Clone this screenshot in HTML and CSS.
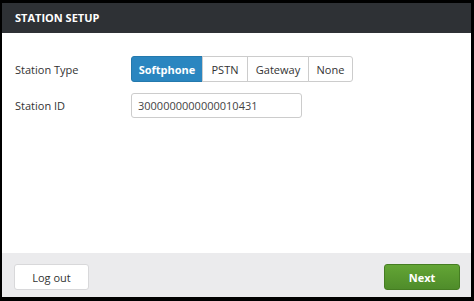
FILE: index.html
```html
<!DOCTYPE html>
<html lang="en">
<head>
  <meta charset="UTF-8">
  <title>Station Setup</title>
  <link rel="stylesheet" href="styles.css">
</head>
<body>
  <div class="dialog">
    <header class="dialog-header">STATION SETUP</header>
    <div class="dialog-body">
      <div class="form-row">
        <label class="form-label">Station Type</label>
        <div class="btn-group">
          <button class="seg seg-softphone active">Softphone</button>
          <button class="seg seg-pstn">PSTN</button>
          <button class="seg seg-gateway">Gateway</button>
          <button class="seg seg-none">None</button>
        </div>
      </div>
      <div class="form-row">
        <label class="form-label">Station ID</label>
        <input class="text-input" type="text" value="3000000000000010431">
      </div>
    </div>
    <footer class="dialog-footer">
      <button class="btn btn-default">Log out</button>
      <button class="btn btn-success">Next</button>
    </footer>
  </div>
</body>
</html>
```

FILE: styles.css
```css
* {
  margin: 0;
  padding: 0;
  box-sizing: border-box;
}

body {
  width: 474px;
  height: 301px;
  background: #000;
  font-family: "Open Sans", "Liberation Sans", sans-serif;
  font-size: 11px;
  color: #333;
  overflow: hidden;
}

.dialog {
  display: flex;
  flex-direction: column;
  margin: 3px 3px 0 2px;
  height: 294px;
  background: #fff;
}

.dialog-header {
  height: 30px;
  background: #2e3135;
  color: #fff;
  font-weight: 700;
  font-size: 11px;
  line-height: 30px;
  padding-left: 13px;
}

.dialog-body {
  flex: 1;
  padding: 23px 0 0 13px;
  display: flex;
  flex-direction: column;
  gap: 11px;
}

.form-row {
  display: flex;
  align-items: center;
}

.form-label {
  width: 116px;
}

.btn-group {
  display: flex;
}

.seg {
  height: 26px;
  padding: 0;
  border: 1px solid #ccc;
  margin-left: -1px;
  background: #fff;
  font-family: inherit;
  font-size: 11px;
  color: #333;
}

.seg:first-child {
  margin-left: 0;
  border-radius: 3px 0 0 3px;
}

.seg:last-child {
  border-radius: 0 3px 3px 0;
}

.seg-softphone { width: 72px; }
.seg-pstn { width: 46px; }
.seg-gateway { width: 62px; }
.seg-none { width: 45px; }

.seg.active {
  background: #2a86c0;
  border-color: #2479ad;
  color: #fff;
  font-weight: 700;
}

.text-input {
  width: 171px;
  height: 25px;
  border: 1px solid #ccc;
  border-radius: 3px;
  padding: 0 6px;
  font-family: inherit;
  font-size: 11px;
  color: #444;
}

.dialog-footer {
  height: 44px;
  background: #ebebed;
  display: flex;
  justify-content: space-between;
  align-items: center;
  padding: 4px 11px 0 12px;
}

.btn {
  height: 26px;
  border-radius: 3px;
  font-family: inherit;
  font-size: 11px;
}

.btn-default {
  width: 75px;
  background: #fff;
  border: 1px solid #d8d8da;
  color: #333;
}

.btn-success {
  width: 76px;
  background: linear-gradient(#63a535, #4f8c2a);
  border: 1px solid #457d22;
  color: #fff;
  font-weight: 700;
}
```
